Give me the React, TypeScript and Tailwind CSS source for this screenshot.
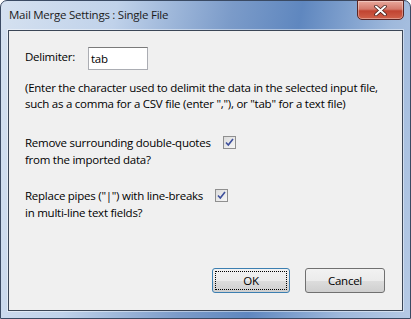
import React from 'react'

function Check() {
  return (
    <span className="w-[13px] h-[13px] border border-[#8f8f8f] bg-gradient-to-br from-[#dcdcdc] to-[#f6f6f6] flex items-center justify-center">
      <svg width="9" height="9" viewBox="0 0 9 9">
        <path d="M1 4.5 L3.3 7 L8 1" fill="none" stroke="#3d4f9c" strokeWidth="1.6" />
      </svg>
    </span>
  )
}

export default function App() {
  return (
    <div className="w-[411px] h-[319px] bg-white font-['Open_Sans',sans-serif] text-[11.5px] tracking-[-0.25px] text-black">
      <div className="w-[411px] h-[319px] rounded-t-[7px] border border-[#3a4a63] bg-[linear-gradient(100deg,#d5e1f0_0%,#c0d2ea_25%,#7b9bc9_50%,#5f87bf_65%,#9fb9dc_85%,#b6cae5_100%)] flex flex-col px-[7px] pb-[7px]">
        {/* Title bar */}
        <div className="h-[29px] flex items-start justify-between">
          <span className="mt-[6px] ml-[1px] leading-[16px] text-[#1b1b1b] whitespace-nowrap">
            Mail Merge Settings : Single File
          </span>
          <div className="w-[47px] h-[20px] -mt-[1px] mr-[-1px] rounded-b-[5px] border border-[#5a2624] bg-[linear-gradient(180deg,#e8a89c_0%,#d47a6c_45%,#c14431_55%,#d0614a_100%)] flex items-center justify-center shadow-[inset_0_0_0_1px_rgba(255,255,255,0.35)]">
            <svg width="13" height="11" viewBox="0 0 13 11">
              <path d="M2 1.5 L11 9.5 M11 1.5 L2 9.5" stroke="#3b1a17" strokeWidth="3.4" strokeLinecap="round" />
              <path d="M2 1.5 L11 9.5 M11 1.5 L2 9.5" stroke="#ffffff" strokeWidth="2" strokeLinecap="round" />
            </svg>
          </div>
        </div>

        {/* Client area */}
        <div className="flex-1 border border-[#3b4656] bg-[#f0f0f0] shadow-[0_0_0_1px_rgba(255,255,255,0.45)] flex flex-col pl-[16px] pr-[8px] whitespace-nowrap">
          <div className="mt-[14px] flex items-center gap-[13px]">
            <span className="-mt-[2px]">Delimiter:</span>
            <div className="w-[60px] h-[23px] border border-[#abadb3] border-t-[#7a7a7a] bg-white flex items-center pl-[2px] mt-[2px]">
              tab
            </div>
          </div>

          <p className="mt-[10px] leading-[16px]">
            (Enter the character used to delimit the data in the selected input file,
            <br />
            such as a comma for a CSV file (enter ","), or "tab" for a text file)
          </p>

          <div className="mt-[22px] flex items-start gap-[12px]">
            <p className="leading-[17px]">
              Remove surrounding double-quotes
              <br />
              from the imported data?
            </p>
            <div className="mt-[2px]">
              <Check />
            </div>
          </div>

          <div className="mt-[19px] flex items-start gap-[12px]">
            <p className="leading-[17px]">
              Replace pipes ("|") with line-breaks
              <br />
              in multi-line text fields?
            </p>
            <div className="mt-[2px]">
              <Check />
            </div>
          </div>

          <div className="mt-auto mb-[17px] flex justify-end gap-[15px] pr-[9px]">
            <button className="w-[78px] h-[25px] rounded-[3px] border border-[#3c7fb1] bg-[linear-gradient(180deg,#f2f2f2_0%,#ebebeb_50%,#dddddd_51%,#cfcfcf_100%)] p-[2px]">
              <span className="w-full h-full border border-dotted border-black flex items-center justify-center">OK</span>
            </button>
            <button className="w-[80px] h-[25px] rounded-[3px] border border-[#707070] bg-[linear-gradient(180deg,#f2f2f2_0%,#ebebeb_50%,#dddddd_51%,#cfcfcf_100%)] flex items-center justify-center">
              Cancel
            </button>
          </div>
        </div>
      </div>
    </div>
  )
}
